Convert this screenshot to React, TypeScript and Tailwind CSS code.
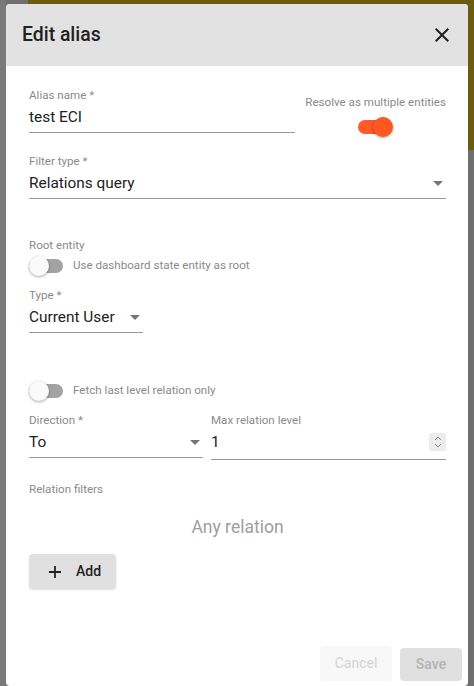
import React from "react";

const font = { fontFamily: "Roboto, 'Liberation Sans', sans-serif" };

function Arrow() {
  return <span className="inline-block w-0 h-0 border-l-[5px] border-r-[5px] border-t-[5px] border-l-transparent border-r-transparent border-t-[#757575]" />;
}

function Toggle({ on, label }: { on?: boolean; label?: string }) {
  return (
    <div className="flex items-center h-[20px]">
      <div className="relative w-[35px] h-[20px] flex items-center">
        <div className={`w-[34px] h-[14px] rounded-full ${on ? "bg-[#ff5a28]" : "bg-[#a3a3a3]"}`} />
        <div
          className={`absolute top-0 w-[20px] h-[20px] rounded-full shadow-[0_1px_3px_rgba(0,0,0,0.35)] ${
            on ? "right-0 bg-[#ff5722]" : "left-0 bg-[#fafafa]"
          }`}
        />
      </div>
      {label && <span className="ml-[9px] text-[11.6px] text-[#8a8a8a]">{label}</span>}
    </div>
  );
}

function Field({
  label,
  value,
  width,
  arrow,
  extra,
  pb = "pb-[5px]",
}: {
  label: string;
  value: string;
  width: string;
  arrow?: boolean;
  extra?: React.ReactNode;
  pb?: string;
}) {
  return (
    <div className={`${width} flex flex-col border-b border-[#9a9a9a] ${pb}`}>
      <div className="h-[14px] leading-[14px] text-[11.6px] text-[#8a8a8a]">{label}</div>
      <div className="mt-[5px] h-[20px] flex items-center justify-between">
        <span className="text-[15.4px] leading-[20px] text-[#212121]">{value}</span>
        {arrow && (
          <span className="mr-[3px] flex items-center">
            <Arrow />
          </span>
        )}
        {extra}
      </div>
    </div>
  );
}

export default function App() {
  return (
    <div className="relative w-[474px] h-[686px] overflow-hidden bg-[#6f6f6f]" style={font}>
      {/* dimmed page behind the dialog */}
      <div className="absolute left-[28px] right-0 top-0 h-[4px] bg-[#6b5b10]" />
      <div className="absolute right-0 top-0 w-[6px] h-[150px] bg-[#6b5b10]" />
      <div className="absolute left-0 top-0 w-[6px] h-full bg-[#7a7a7a]" />

      <div className="relative mt-[4px] ml-[6px] w-[462px] h-[682px] bg-white rounded-[4px] overflow-hidden flex flex-col">
        {/* header */}
        <div className="h-[62px] bg-[#e2e2e2] flex items-center justify-between pl-[16px] pr-[14px] shrink-0">
          <span className="text-[19.4px] font-medium text-[#212121]">Edit alias</span>
          <svg width="24" height="24" viewBox="0 0 24 24">
            <path d="M19 6.41 17.59 5 12 10.59 6.41 5 5 6.41 10.59 12 5 17.59 6.41 19 12 13.41 17.59 19 19 17.59 13.41 12z" fill="#212121" />
          </svg>
        </div>

        {/* body */}
        <div className="flex-1 flex flex-col pl-[23px] pr-[22px]">
          <div className="mt-[22px] flex items-start">
            <Field label="Alias name *" value="test ECI" width="w-[267px]" />
            <div className="ml-[10px] flex-1 flex flex-col items-center">
              <div className="mt-[7px] h-[14px] leading-[14px] text-[11.6px] text-[#8a8a8a] whitespace-nowrap">
                Resolve as multiple entities
              </div>
              <div className="mt-[8px]">
                <Toggle on />
              </div>
            </div>
          </div>

          <div className="mt-[17px]">
            <Field label="Filter type *" value="Relations query" width="w-full" arrow />
          </div>

          <div className="mt-[39px] h-[14px] leading-[14px] text-[11.6px] text-[#8a8a8a]">Root entity</div>
          <div className="mt-[4px]">
            <Toggle label="Use dashboard state entity as root" />
          </div>

          <div className="mt-[12px]">
            <Field label="Type *" value="Current User" width="w-[114px]" arrow />
          </div>

          <div className="mt-[48px]">
            <Toggle label="Fetch last level relation only" />
          </div>

          <div className="mt-[12px] flex gap-[8px] items-start">
            <Field label="Direction *" value="To" width="w-[174px]" arrow />
            <Field
              label="Max relation level"
              value="1"
              width="flex-1"
              pb="pb-[7px]"
              extra={
                <span className="w-[17px] h-[18px] bg-[#ececec] rounded-[2px] flex flex-col items-center justify-center gap-[2px]">
                  <svg width="8" height="5" viewBox="0 0 8 5">
                    <path d="M1 4 4 1 7 4" fill="none" stroke="#8a8a8a" strokeWidth="1" />
                  </svg>
                  <svg width="8" height="5" viewBox="0 0 8 5">
                    <path d="M1 1 4 4 7 1" fill="none" stroke="#8a8a8a" strokeWidth="1" />
                  </svg>
                </span>
              }
            />
          </div>

          <div className="mt-[22px] h-[14px] leading-[14px] text-[11.6px] text-[#8a8a8a]">Relation filters</div>
          <div className="mt-[20px] h-[22px] leading-[22px] text-[17.5px] text-[#9e9e9e] text-center">Any relation</div>

          <button className="mt-[16px] w-[87px] h-[35px] bg-[#e0e0e0] rounded-[4px] shadow-[0_1px_2px_rgba(0,0,0,0.12)] flex items-center pl-[20px] gap-[15px]">
            <svg width="12" height="12" viewBox="0 0 12 12">
              <path d="M6 0v12M0 6h12" stroke="#212121" strokeWidth="1.8" />
            </svg>
            <span className="text-[14px] font-medium text-[#212121]">Add</span>
          </button>
        </div>

        {/* footer */}
        <div className="flex justify-end items-end gap-[8px] pr-[6px] pb-[5px] shrink-0">
          <button className="w-[72px] h-[35px] rounded-[4px] bg-[#f8f8f8] text-[14px] text-[#d4d4d4]">Cancel</button>
          <button className="w-[62px] h-[33px] rounded-[4px] bg-[#e0e0e0] text-[14px] font-medium text-[#b3b3b3]">Save</button>
        </div>
      </div>
    </div>
  );
}
